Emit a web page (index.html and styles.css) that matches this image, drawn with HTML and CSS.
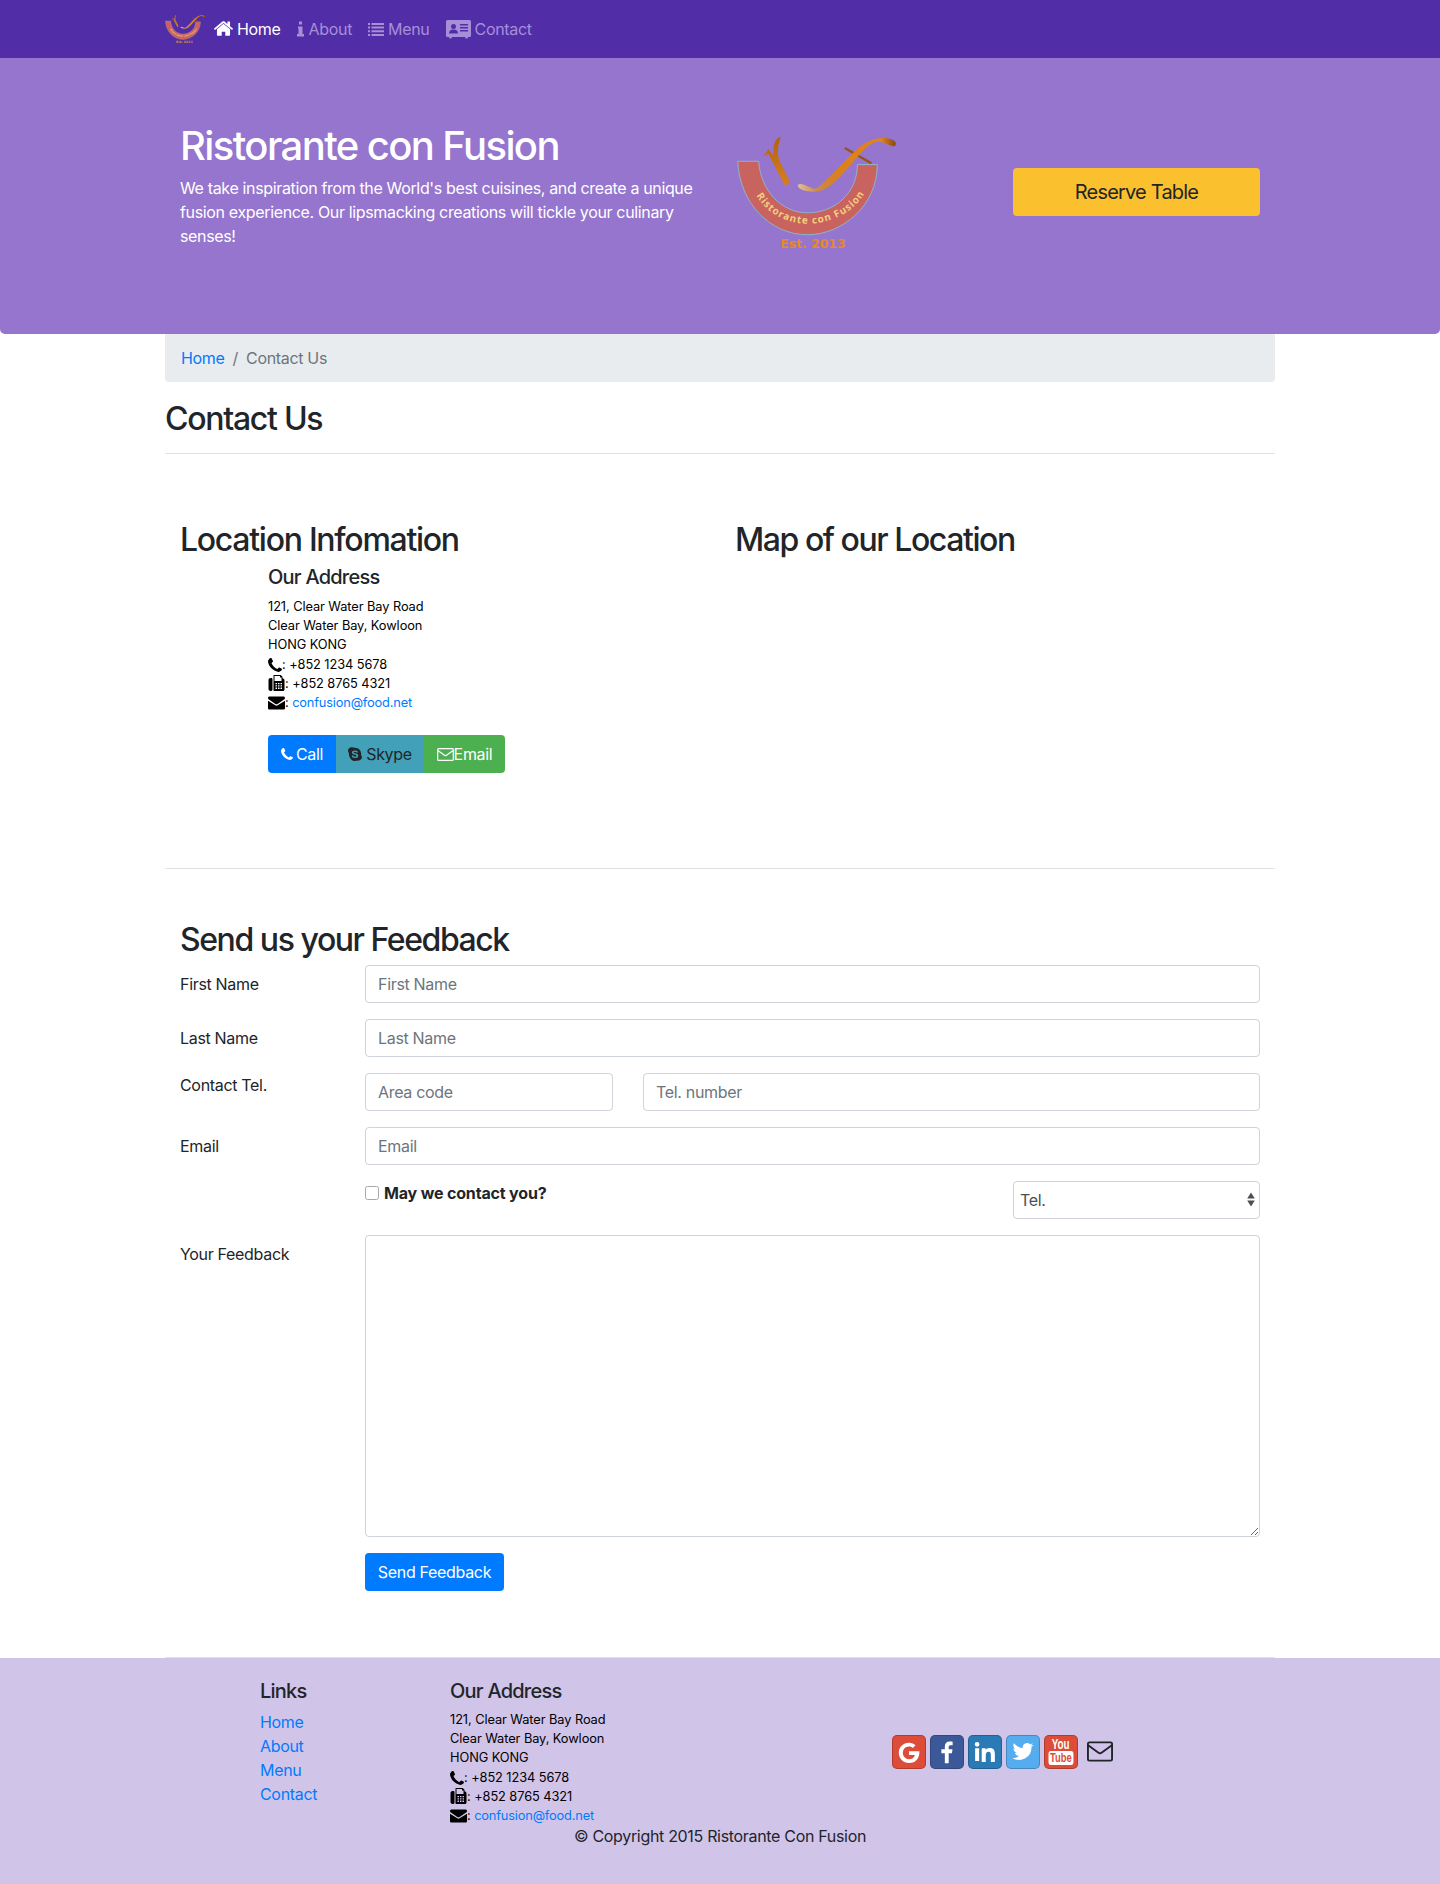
FILE: index.html
```html
<!DOCTYPE html>
<html lang="en">
<head>
<meta charset="utf-8">
<title>Ristorante con Fusion: Contact Us</title>
<link rel="stylesheet" href="styles.css">
</head>
<body>
<svg class="defs" width="0" height="0" aria-hidden="true">
  <defs>
    <linearGradient id="sw" gradientUnits="userSpaceOnUse" x1="295" y1="0" x2="590" y2="0"><stop offset="0" stop-color="#dcc0a0"/><stop offset=".2" stop-color="#c98a4a"/><stop offset=".4" stop-color="#d9801f"/><stop offset=".85" stop-color="#e0851a"/><stop offset="1" stop-color="#8a4a10"/></linearGradient>
    <linearGradient id="sw2" gradientUnits="userSpaceOnUse" x1="0" y1="85" x2="0" y2="232"><stop offset="0" stop-color="#b5620f"/><stop offset="1" stop-color="#d5801f"/></linearGradient>
    <symbol id="logo" viewBox="110 75 490 355">
      <path d="M115 157 L178 157 C185 250 250 312 325 312 C410 312 475 250 475 167 L535 167 C535 290 430 378 325 378 C210 378 120 280 115 157Z" fill="#c9635f" stroke="#8fb3cf" stroke-width="3"/>
      <path d="M192 143 L207 120 L222 140 C222 110 225 88 245 83 C238 100 232 125 240 155 L272 218 L258 232 L215 150 L207 135 Z" fill="url(#sw2)"/>
      <path d="M437 117 L517 163" stroke="#9b5313" stroke-width="7"/>
      <path d="M295 230 C305 218 325 235 345 240 C365 240 420 170 470 125 C500 95 530 85 560 87 C580 90 595 98 590 108 C585 118 570 105 545 98 C520 95 500 115 470 150 C440 185 400 235 365 246 C340 252 300 248 295 230Z" fill="url(#sw)"/>
      <path id="lp" d="M170 258C205 320 270 345 325 345C395 345 465 310 497 252" fill="none"/>
      <text class="logo-ring" textLength="385"><textPath href="#lp" startOffset="2">Ristorante con Fusion</textPath></text>
      <text class="logo-est" x="243" y="418" textLength="197">Est. 2013</text>
    </symbol>
    <symbol id="i-home" viewBox="0 0 18 15"><path d="M9 2.600 2.800 7.800V13.300c0 .4.300.7.700.7H7.300V10h3.400v4h3.800c.4 0 .7-.3.700-.7V7.800ZM17.900 7 15.200 4.800V.8c0-.2-.2-.3-.4-.3H13c-.2 0-.3.100-.3.300v1.900L10 .5c-.6-.5-1.400-.5-2 0L.1 7c-.1.100-.2.300 0 .5l.6.700c.1.200.3.200.5.100L9 1.800l7.800 6.500c.2.100.4.100.5-.1l.6-.7c.2-.2.100-.4 0-.5Z"/></symbol>
    <symbol id="i-info" viewBox="0 0 7 15"><path d="M2 0h3v3H2ZM1 5h4.500v7.500H7V15H0v-2.500h1.500V7H1Z"/></symbol>
    <symbol id="i-list" viewBox="0 0 16 13"><path d="M0 0h2v2H0Zm3.500 0H16v2H3.500ZM0 3.600h2v2H0Zm3.500 0H16v2H3.500ZM0 7.300h2v2H0Zm3.500 0H16v2H3.500ZM0 11h2v2H0Zm3.500 0H16v2H3.500Z"/></symbol>
    <symbol id="i-card" viewBox="0 0 25 19"><path fill-rule="evenodd" d="M1.500 0h22A1.500 1.500 0 0 1 25 1.500v14a1.500 1.500 0 0 1-1.500 1.500H22l-.5 1.500h-1.800L19 17H6l-.7 1.500H3.500L3 17H1.500A1.500 1.500 0 0 1 0 15.500v-14A1.500 1.500 0 0 1 1.500 0ZM7.500 4a2.500 2.500 0 1 0 0 5 2.500 2.500 0 0 0 0-5ZM3 13.500h9c0-2.500-1.500-4-4.500-4S3 11 3 13.500ZM14 4v1.500h8V4Zm0 3v1.500h8V7Zm0 3v1.500h8V10Z"/></symbol>
    <symbol id="i-phone" viewBox="0 0 14 14"><path d="M14 10.800c0 .3-.1.800-.2 1.200-.2.500-1.100 1-1.600 1.300-.5.300-1.200.6-1.800.6-2.900-.3-5.400-2-7.200-3.800C1.400 8.300.3 5.800 0 3.600c0-.6.300-1.300.6-1.800C.9 1.300 1.400.4 1.900.2 2.300.1 2.800 0 3.100 0c.1 0 .2 0 .3.100.2.100 1.400 2.700 1.600 3 .2.400-.1.700-.4 1-.3.300-1 .8-1 1.200 0 .3.300.7.800 1.500.9 1.400 2 2.600 3.400 3.500.6.400 1 .7 1.400.7.400 0 .9-.7 1.200-1 .3-.3.600-.6 1-.4.300.2 2.900 1.400 3 1.600.1.100.1.300.1.400Z"/></symbol>
    <symbol id="i-fax" viewBox="0 0 16 16"><path fill-rule="evenodd" d="M2.200 3h.6c.6 0 1.200.5 1.200 1.200v10.600c0 .7-.6 1.200-1.200 1.200h-.6C1 16 0 15.100 0 14V5c0-1.100 1-2 2.200-2ZM5 0h7.200L14 1.800V3.300c1 .3 2 .9 2 2V14.500c0 .8-.7 1.500-1.500 1.500h-9c-.3 0-.5-.2-.5-.5V.5c0-.3.200-.5.500-.5ZM6 1v5h7V2.500h-1.500V1ZM7 8v1.300h1.500V8Zm2.500 0v1.300H11V8ZM12 8v1.300h1.500V8ZM7 10.300v1.300h1.500v-1.300Zm2.500 0v1.300H11v-1.300Zm2.500 0v1.300h1.500v-1.300ZM7 12.600v1.300h1.500v-1.300Zm2.500 0v1.300H11v-1.300Zm2.500 0v1.300h1.500v-1.300Z"/></symbol>
    <symbol id="i-env" viewBox="0 0 18 14"><path d="M0 1.600C0 .7.700 0 1.600 0h14.800c.9 0 1.600.7 1.600 1.600 0 .8-.4 1.300-1 1.700L9.800 8.200c-.5.300-1.100.3-1.600 0L1 3.300C.4 2.900 0 2.400 0 1.600ZM0 4.500l7.700 5c.8.500 1.800.5 2.600 0l7.700-5v8c0 .9-.7 1.500-1.600 1.500H1.600C.7 14 0 13.400 0 12.500Z"/></symbol>
    <symbol id="i-envo" viewBox="0 0 22 17"><path d="M2 .8h18c.7 0 1.200.5 1.200 1.200v13c0 .7-.5 1.200-1.200 1.200H2c-.7 0-1.200-.5-1.200-1.200V2C.8 1.300 1.300.8 2 .8ZM1 3.200l8.700 6.300c.8.600 1.800.6 2.600 0L21 3.200" fill="none" stroke="currentColor" stroke-width="1.600"/></symbol>
    <symbol id="i-skype" viewBox="0 0 14 14"><path fill-rule="evenodd" d="M7 .8c3.400 0 6.200 2.800 6.200 6.200 0 .4 0 .8-.1 1.200.6.600.9 1.300.9 2.100 0 2-2.200 3.600-4 3.300-.9.200-2 .4-3 .4C3.600 14 .8 10.400.9 5.900.3 5.300 0 4.500 0 3.700 0 1.600 2 .1 3.800.3 4.800.3 6 .8 7 .8Zm-.1 2.600c-1.600 0-3 .8-3 2.200 0 2.500 4.600 1.900 4.600 3.200 0 .6-.7.900-1.500.9-1.500 0-1.600-1.400-2.500-1.400-.5 0-.8.400-.8.800 0 1 1.500 2 3.400 2 1.800 0 3.200-.8 3.200-2.400 0-2.700-4.700-2.100-4.700-3.200 0-.5.500-.8 1.200-.8 1.400 0 1.400 1 2.300 1 .5 0 .8-.4.800-.8 0-.9-1.400-1.500-3-1.500Z"/></symbol>
  </defs>
</svg>

<nav class="navbar">
  <div class="nav-inner">
    <svg class="nav-logo"><use href="#logo"/></svg>
    <a class="nav-link active" href="#"><svg class="ic ic-home"><use href="#i-home"/></svg> Home</a>
    <a class="nav-link" href="#"><svg class="ic ic-info"><use href="#i-info"/></svg> About</a>
    <a class="nav-link" href="#"><svg class="ic ic-list"><use href="#i-list"/></svg> Menu</a>
    <a class="nav-link" href="#"><svg class="ic ic-card"><use href="#i-card"/></svg> Contact</a>
  </div>
</nav>

<header class="jumbotron">
  <div class="jumbo-inner">
    <div class="jumbo-text">
      <h1>Ristorante con Fusion</h1>
      <p>We take inspiration from the World's best cuisines, and create a unique fusion experience. Our lipsmacking creations will tickle your culinary senses!</p>
    </div>
    <div class="jumbo-logo"><svg class="hero-logo"><use href="#logo"/></svg></div>
    <div class="jumbo-cta"><a class="btn btn-warning" href="#">Reserve Table</a></div>
  </div>
</header>

<main class="container">
  <ol class="breadcrumb">
    <li><a href="#">Home</a></li>
    <li class="sep">/</li>
    <li class="current">Contact Us</li>
  </ol>
  <div class="page-title">
    <h3>Contact Us</h3>
    <hr>
  </div>

  <section class="location">
    <div class="loc-col">
      <h2>Location Infomation</h2>
      <div class="loc-body">
        <h5>Our Address</h5>
        <address>
          121, Clear Water Bay Road<br>
          Clear Water Bay, Kowloon<br>
          HONG KONG<br>
          <svg class="ci ci-phone"><use href="#i-phone"/></svg>: +852 1234 5678<br>
          <svg class="ci ci-fax"><use href="#i-fax"/></svg>: +852 8765 4321<br>
          <svg class="ci ci-env"><use href="#i-env"/></svg>: <a href="#">confusion@food.net</a>
        </address>
        <div class="btn-group">
          <a class="btn btn-primary" href="#"><svg class="bi bi-phone"><use href="#i-phone"/></svg> Call</a>
          <a class="btn btn-info" href="#"><svg class="bi bi-skype"><use href="#i-skype"/></svg> Skype</a>
          <a class="btn btn-success" href="#"><svg class="bi bi-env"><use href="#i-envo"/></svg>Email</a>
        </div>
      </div>
    </div>
    <div class="loc-col map-col">
      <h2>Map of our Location</h2>
    </div>
  </section>
  <hr class="section-rule">

  <section class="feedback">
    <h2>Send us your Feedback</h2>
    <form class="form">
      <div class="form-row">
        <label class="form-label" for="fn">First Name</label>
        <input class="form-control" id="fn" placeholder="First Name">
      </div>
      <div class="form-row">
        <label class="form-label" for="ln">Last Name</label>
        <input class="form-control" id="ln" placeholder="Last Name">
      </div>
      <div class="form-row">
        <label class="form-label tel-label" for="ac">Contact Tel.</label>
        <div class="tel-fields">
          <input class="form-control" id="ac" placeholder="Area code">
          <input class="form-control" placeholder="Tel. number">
        </div>
      </div>
      <div class="form-row">
        <label class="form-label" for="em">Email</label>
        <input class="form-control" id="em" placeholder="Email">
      </div>
      <div class="form-row">
        <span class="form-label"></span>
        <div class="contact-fields">
          <label class="check"><input type="checkbox"> <strong>May we contact you?</strong></label>
          <div class="select">Tel.<svg class="select-arrows" viewBox="0 0 8 15"><path d="M4 .5 7.800 6.500H.2ZM4 14.500 .2 8.500h7.600Z"/></svg></div>
        </div>
      </div>
      <div class="form-row">
        <label class="form-label" for="fb">Your Feedback</label>
        <textarea class="form-control textarea" id="fb"></textarea>
      </div>
      <div class="form-row">
        <span class="form-label"></span>
        <div><button class="btn btn-primary btn-send" type="button">Send Feedback</button></div>
      </div>
    </form>
  </section>
</main>

<footer class="footer">
  <div class="footer-rule"></div>
  <div class="footer-inner">
    <div class="footer-links">
      <h5>Links</h5>
      <ul>
        <li><a href="#">Home</a></li>
        <li><a href="#">About</a></li>
        <li><a href="#">Menu</a></li>
        <li><a href="#">Contact</a></li>
      </ul>
    </div>
    <div class="footer-addr">
      <h5>Our Address</h5>
      <address>
        121, Clear Water Bay Road<br>
        Clear Water Bay, Kowloon<br>
        HONG KONG<br>
        <svg class="ci ci-phone"><use href="#i-phone"/></svg>: +852 1234 5678<br>
        <svg class="ci ci-fax"><use href="#i-fax"/></svg>: +852 8765 4321<br>
        <svg class="ci ci-env"><use href="#i-env"/></svg>: <a href="#">confusion@food.net</a>
      </address>
    </div>
    <div class="social">
      <a class="soc soc-g" href="#"><svg viewBox="4 4 26 26"><path d="M17 9.500c2.100 0 3.900.8 5.300 2l-2.200 2.200c-.8-.8-1.900-1.200-3.100-1.200-2.900 0-5 2.300-5 5.200s2.100 5.200 5 5.200c2.500 0 4.300-1.300 4.800-3.500H17v-3h8.400c.4 3.900-1.600 9.600-8.400 9.600-4.700 0-8.300-3.600-8.300-8.300S12.300 9.500 17 9.500Z" fill="#fff"/></svg></a>
      <a class="soc soc-f" href="#"><svg viewBox="0 0 34 34"><path d="M18.800 29V18.300h3.500l.5-4.100h-4v-2.500c0-1.200.3-2 2-2h2.200V6c-.4 0-1.700-.2-3.100-.2-3.100 0-5.200 1.900-5.200 5.300v3.100H11v4.100h3.700V29Z" fill="#fff"/></svg></a>
      <a class="soc soc-in" href="#"><svg viewBox="0 0 34 34"><path d="M5.500 13.500h4.300V27H5.500ZM7.600 6.800a2.500 2.500 0 1 1 0 5 2.500 2.500 0 0 1 0-5ZM12.500 13.500h4.100v1.900c.7-1.200 2.200-2.200 4.400-2.200 4.500 0 5.500 2.900 5.500 6.800v8h-4.300v-7c0-1.700 0-3.800-2.300-3.800s-3.100 1.800-3.100 3.700V28h-4.300Z" fill="#fff" transform="translate(1 -.500)"/></svg></a>
      <a class="soc soc-t" href="#"><svg viewBox="0 0 34 34"><path d="M28 9.500c-.9.400-1.700.6-2.600.8.900-.6 1.600-1.400 2-2.500-.9.500-1.800.9-2.800 1.100a4.600 4.600 0 0 0-7.800 4.200C13 12.400 9.700 10.600 7.400 7.800c-1.200 2.100-.6 4.800 1.400 6.200-.7 0-1.400-.2-2-.6 0 2.300 1.600 4.200 3.700 4.600-.7.200-1.400.2-2.100.1.600 1.800 2.300 3.100 4.300 3.200-2 1.600-4.400 2.300-6.900 2a13.100 13.100 0 0 0 20.200-11.600c.9-.6 1.700-1.400 2.500-2.200Z" fill="#fff"/></svg></a>
      <a class="soc soc-y" href="#"><span class="yt-you">You</span><span class="yt-tube">Tube</span></a>
      <a class="soc-mail" href="#"><svg><use href="#i-envo"/></svg></a>
    </div>
  </div>
  <p class="copyright">© Copyright 2015 Ristorante Con Fusion</p>
</footer>
</body>
</html>
```
FILE: styles.css
```css
* { box-sizing: border-box; }
html, body { margin: 0; padding: 0; }
body {
  font-family: Inter, "Liberation Sans", sans-serif;
  font-size: 16px;
  line-height: 24px;
  letter-spacing: -.32px;
  color: #212529;
  background: #fff;
}
a { color: #007bff; text-decoration: none; }
h1, h2, h3, h5, p, ul, ol, address { margin: 0; padding: 0; }
h1, h2, h3, h5 { font-weight: 500; line-height: 1.2; }
h1, h2, h3 { letter-spacing: -.04em; }
h5 { letter-spacing: -.038em; }
.defs { position: absolute; }

.logo-ring { font: 700 30px "Open Sans", sans-serif; fill: #f4cf7c; letter-spacing: 0; }
.logo-est { font: 700 38px "DejaVu Sans", sans-serif; fill: #e28a2c; letter-spacing: 0; }

/* navbar */
.navbar { background: #512DA8; height: 58px; }
.nav-inner { width: 1110px; margin: 0 auto; height: 58px; display: flex; align-items: center; }
.nav-logo { width: 41px; height: 30px; margin-bottom: 1px; }
.nav-link { display: flex; align-items: center; gap: 4px; padding: 0 8px; color: #a68fd8; white-space: nowrap; }
.nav-link.active { color: #fff; }
.ic { fill: currentColor; display: block; }
.ic-home { width: 19px; height: 16px; }
.ic-info { width: 7px; height: 16px; margin-right: 1px; }
.ic-list { width: 16px; height: 13px; }
.ic-card { width: 25px; height: 19px; }

/* jumbotron */
.jumbotron { background: #9575CD; height: 276px; border-radius: 0 0 5px 5px; padding-top: 64px; }
.jumbo-inner { width: 1140px; margin: 0 auto; display: grid; grid-template-columns: 570px 270px 300px; }
.jumbo-text { padding: 0 15px 0 30px; }
.jumbo-text h1 { font-size: 40px; color: #fff; line-height: 48px; margin-bottom: 6px; }
.jumbo-text p { color: #fff; font-size: 16px; line-height: 24px; letter-spacing: -.35px; }
.jumbo-logo { padding-left: 16px; }
.hero-logo { width: 163px; height: 118px; display: block; margin-top: 12px; }
.jumbo-cta { padding: 46px 30px 0 0; display: flex; justify-content: flex-end; }

.btn { display: inline-flex; align-items: center; justify-content: center; height: 38px; padding: 0 12px; border: 0; border-radius: 4px; font: inherit; letter-spacing: inherit; color: #fff; white-space: nowrap; }
.btn-warning { color: #212529; width: 247px; height: 48px; font-size: 20px; letter-spacing: -.8px; border-radius: 4px; background: #fbc02d; }
.btn-primary { background: #007bff; color: #fff; }
.btn-info { background: #42a0b8; color: #212529; }
.btn-success { background: #4caf50; color: #fff; }

/* main */
.container { width: 1110px; margin: 0 auto; }
.breadcrumb { list-style: none; display: flex; height: 48px; align-items: center; padding: 0 16px; background: #e9ecef; border-radius: 0 0 4px 4px; gap: 8px; }
.breadcrumb .sep, .breadcrumb .current { color: #6c757d; }
.page-title { padding-top: 18px; }
.page-title h3 { font-size: 32px; line-height: 38px; margin-bottom: 15px; }
hr { margin: 0; border: 0; border-top: 1px solid #dfe1e4; }
.location { display: grid; grid-template-columns: 555px 555px; padding-top: 67px; height: 414px; }
.location h2, .feedback h2 { font-size: 32px; line-height: 38px; }
.map-col h2, .feedback h2 { letter-spacing: -.045em; }
.loc-col { padding-left: 15px; }
.loc-body { padding-left: 88px; padding-top: 6px; }
.loc-body h5 { font-size: 20px; line-height: 24px; margin-bottom: 8px; }
address { font-style: normal; font-size: 12.800px; line-height: 19.200px; letter-spacing: -.07px; color: #000; }
address a { letter-spacing: -.16px; }
.ci { fill: #000; display: inline-block; vertical-align: -3px; }
.ci-phone { width: 14px; height: 14px; }
.ci-fax { width: 17px; height: 16px; }
.ci-env { width: 17px; height: 14px; }
.btn-group { display: flex; margin-top: 23px; width: 237px; }
.btn-group .btn { border-radius: 0; }
.btn-group .btn:first-child { border-radius: 4px 0 0 4px; width: 68px; }
.btn-group .btn-info { width: 88px; }
.btn-group .btn:last-child { border-radius: 0 4px 4px 0; width: 81px; }
.bi { fill: currentColor; display: block; margin-right: 3px; }
.bi-phone { width: 12px; height: 12px; }
.bi-skype { width: 14px; height: 14px; margin-right: 4px; }
.bi-env { width: 17px; height: 13px; margin-right: 0; }

/* form */
.feedback { padding: 52px 15px 0; }
.feedback h2 { margin-bottom: 6px; }
.form { display: flex; flex-direction: column; }
.form-row { display: grid; grid-template-columns: 185px 895px; margin-bottom: 16px; }
.form-label { line-height: 24px; padding-top: 7px; font-size: 16px; }
.tel-label { padding-top: 0; }
.form-control { display: block; width: 100%; height: 38px; padding: 6px 12px; font: inherit; letter-spacing: inherit; color: #495057; background: #fff; border: 1px solid #ced4da; border-radius: 4px; }
.form-control::placeholder { color: #6c757d; opacity: 1; }
.tel-fields { display: grid; grid-template-columns: 248px 617px; gap: 30px; }
.contact-fields { display: flex; justify-content: space-between; }
.check { display: flex; align-items: center; height: 24px; gap: 5px; }
.check input { width: 14px; height: 14px; margin: 0; appearance: none; border: 1px solid #a9a9a9; border-radius: 2.500px; background: #fff; }
.check strong { font-weight: 700; letter-spacing: -.16px; }
.select { position: relative; width: 247px; height: 38px; padding: 6px 6px; border: 1px solid #ced4da; border-radius: 4px; color: #495057; background: #fff; }
.select-arrows { position: absolute; right: 4px; top: 10px; width: 8px; height: 15px; fill: #495057; }
.textarea { height: 302px; resize: vertical; }
.btn-send { width: 139px; }
.form-row:last-child { margin-bottom: 0; }

/* footer */
.footer { position: relative; margin-top: 67px; height: 226px; background: #D1C4E9; padding-top: 21px; }
.footer-rule { position: absolute; top: -1px; left: 165px; width: 1110px; border-top: 1px solid #dfe1e4; }
.footer-inner { display: flex; padding-left: 260px; }
.footer-links { width: 190px; }
.footer-links h5, .footer-addr h5 { font-size: 20px; line-height: 24px; margin-bottom: 7px; }
.footer-links ul { list-style: none; }
.footer-addr { width: 442px; }
.social { display: flex; align-items: center; gap: 4px; height: 34px; margin-top: 56px; }
.soc { display: block; width: 34px; height: 34px; border-radius: 5px; border: 1px solid rgba(0,0,0,.2); overflow: hidden; }
.soc svg { display: block; width: 32px; height: 32px; }
.soc-g { background: #dd4b39; }
.soc-f { background: #3b5998; }
.soc-in { background: #2a7ab5; }
.soc-t { background: #55acee; }
.soc-y { background: #dd4b39; color: #fff; display: flex; flex-direction: column; align-items: center; font-family: "Liberation Sans", sans-serif; font-weight: 700; letter-spacing: 0; }
.yt-you { font-size: 14px; line-height: 14px; transform: scaleX(.7); margin-top: 1px; }
.yt-tube { font-size: 12px; line-height: 14px; background: #fff; color: #dd4b39; border-radius: 3px; padding: 0 2px; transform: scaleX(.78); }
.soc-mail { display: block; margin-left: 5px; width: 26px; height: 22px; color: #212529; }
.soc-mail svg { width: 26px; height: 21px; display: block; }
.copyright { text-align: center; margin-top: -1px; }
```
